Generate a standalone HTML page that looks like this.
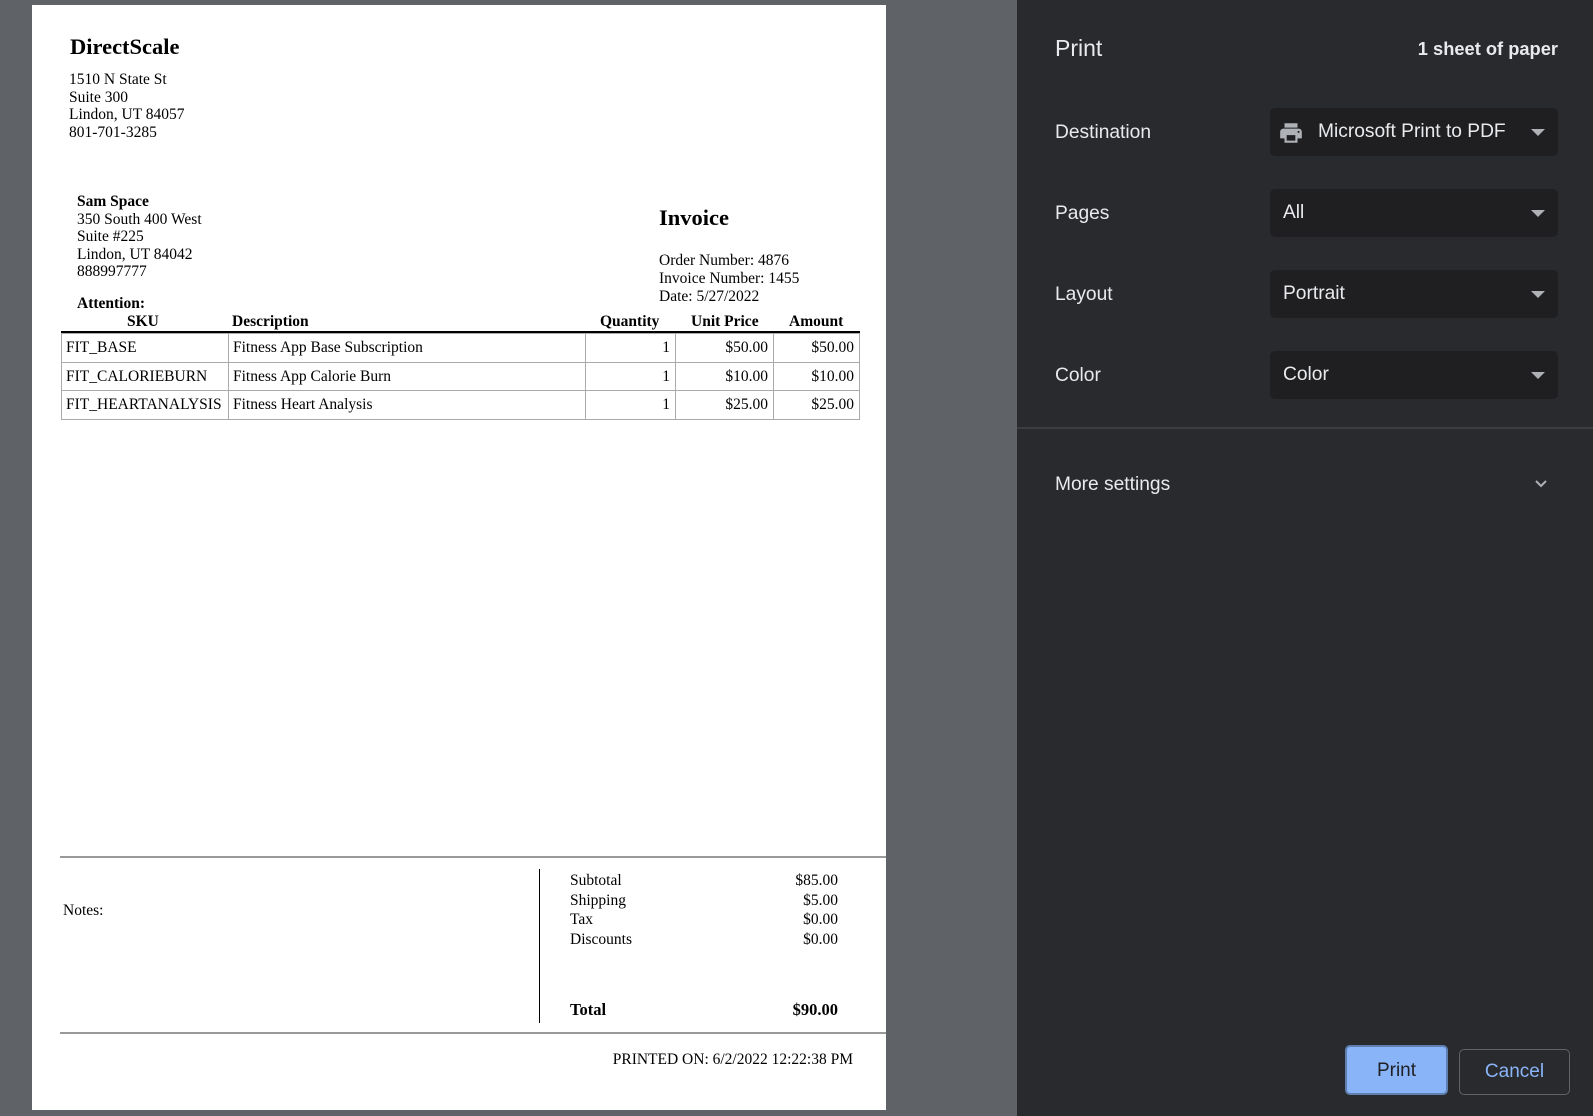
<!DOCTYPE html>
<html><head><meta charset="utf-8"><style>
*{margin:0;padding:0;box-sizing:border-box}
body{width:1593px;height:1116px;background:#5f6368;position:relative;overflow:hidden;font-family:"Liberation Serif",serif;color:#000}
.a{position:absolute;white-space:nowrap}
#page{position:absolute;left:32px;top:5px;width:854px;height:1105px;background:#fff}
.s{font-size:15.5px;line-height:17.5px}
.b{font-weight:bold}
.hl{position:absolute;background:#999;height:2px}
#panel{position:absolute;left:1017px;top:0;width:576px;height:1116px;background:#292a2d;font-family:"Liberation Sans",sans-serif;color:#e8eaed;font-weight:500}
.lab{position:absolute;left:38px;font-size:19.2px}
.sel{position:absolute;left:253px;width:288px;height:48px;background:#1f1f21;border-radius:5px;font-size:19.2px;padding-left:13px;line-height:48px}
.sel:after{content:"";position:absolute;right:13px;top:21px;border-left:7px solid transparent;border-right:7px solid transparent;border-top:7px solid #aeb1b6}
table{border-collapse:collapse}
</style></head><body>
<div id="page">
<div class="a b" style="left:38px;top:29px;font-size:22.5px">DirectScale</div>
<div class="a s" style="left:37px;top:66px">1510 N State St<br>Suite 300<br>Lindon, UT 84057<br>801-701-3285</div>
<div class="a s" style="left:45px;top:188px"><b>Sam Space</b><br>350 South 400 West<br>Suite #225<br>Lindon, UT 84042<br>888997777</div>
<div class="a s b" style="left:45px;top:290px">Attention:</div>
<div class="a b" style="left:627px;top:200px;font-size:22.5px">Invoice</div>
<div class="a s" style="left:627px;top:247px;line-height:18px">Order Number: 4876<br>Invoice Number: 1455<br>Date: 5/27/2022</div>
<div class="a s b" style="left:95px;top:308px">SKU</div>
<div class="a s b" style="left:200px;top:308px">Description</div>
<div class="a s b" style="left:568px;top:308px">Quantity</div>
<div class="a s b" style="left:659px;top:308px">Unit Price</div>
<div class="a s b" style="left:757px;top:308px">Amount</div>
<div class="a" style="left:29px;top:326px;width:799px;height:2px;background:#000"></div>
<table class="a s" style="left:29px;top:328px;width:799px">
<tr style="height:28.5px"><td style="width:167px;border:1px solid #aaa;padding-left:4px">FIT_BASE</td><td style="width:357px;border:1px solid #aaa;padding-left:4px">Fitness App Base Subscription</td><td style="width:90px;border:1px solid #aaa;text-align:right;padding-right:5px">1</td><td style="width:98px;border:1px solid #aaa;text-align:right;padding-right:5px">$50.00</td><td style="border:1px solid #aaa;text-align:right;padding-right:5px">$50.00</td></tr>
<tr style="height:28.5px"><td style="border:1px solid #aaa;padding-left:4px">FIT_CALORIEBURN</td><td style="border:1px solid #aaa;padding-left:4px">Fitness App Calorie Burn</td><td style="border:1px solid #aaa;text-align:right;padding-right:5px">1</td><td style="border:1px solid #aaa;text-align:right;padding-right:5px">$10.00</td><td style="border:1px solid #aaa;text-align:right;padding-right:5px">$10.00</td></tr>
<tr style="height:28.5px"><td style="border:1px solid #aaa;padding-left:4px">FIT_HEARTANALYSIS</td><td style="border:1px solid #aaa;padding-left:4px">Fitness Heart Analysis</td><td style="border:1px solid #aaa;text-align:right;padding-right:5px">1</td><td style="border:1px solid #aaa;text-align:right;padding-right:5px">$25.00</td><td style="border:1px solid #aaa;text-align:right;padding-right:5px">$25.00</td></tr>
</table>
<div class="hl" style="left:28px;top:851px;width:826px"></div>
<div class="a" style="left:507px;top:864px;width:1px;height:154px;background:#000"></div>
<div class="hl" style="left:28px;top:1027px;width:826px"></div>
<div class="a s" style="left:31px;top:897px">Notes:</div>
<div class="a s" style="left:538px;top:866px;line-height:19.5px">Subtotal<br>Shipping<br>Tax<br>Discounts</div>
<div class="a s" style="left:700px;top:866px;width:106px;text-align:right;line-height:19.5px">$85.00<br>$5.00<br>$0.00<br>$0.00</div>
<div class="a s b" style="left:538px;top:996px;font-size:16.5px">Total</div>
<div class="a s b" style="left:700px;top:996px;width:106px;text-align:right;font-size:16.5px">$90.00</div>
<div class="a s" style="left:500px;top:1046px;width:321px;text-align:right">PRINTED ON: 6/2/2022 12:22:38 PM</div>
</div>
<div id="panel">
<div class="a" style="left:38px;top:35px;font-size:23px">Print</div>
<div class="a" style="right:35px;top:38px;font-size:18.3px;font-weight:bold">1 sheet of paper</div>
<div class="lab" style="top:122px">Destination</div>
<div class="lab" style="top:203px">Pages</div>
<div class="lab" style="top:284px">Layout</div>
<div class="lab" style="top:365px">Color</div>
<div class="sel" style="top:108px;padding-left:48px">
<svg style="position:absolute;left:8px;top:12px" width="26" height="26" viewBox="0 0 24 24"><path fill="#aeb1b6" d="M19 8H5c-1.66 0-3 1.340-3 3v6h4v4h12v-4h4v-6c0-1.66-1.34-3-3-3zm-3 11H8v-5h8v5zm3-7c-.55 0-1-.45-1-1s.45-1 1-1 1 .45 1 1-.45 1-1 1zm-1-9H6v4h12V3z"/></svg>Microsoft Print to PDF</div>
<div class="sel" style="top:189px">All</div>
<div class="sel" style="top:270px">Portrait</div>
<div class="sel" style="top:351px">Color</div>
<div class="a" style="left:0;top:427px;width:576px;height:2px;background:#3c3d40"></div>
<div class="lab" style="top:474px">More settings</div>
<svg class="a" style="left:516px;top:476px" width="16" height="16" viewBox="0 0 16 16"><path d="M3 5l5 5 5-5" stroke="#aeb1b6" stroke-width="2" fill="none"/></svg>
<div class="a" style="left:328px;top:1045px;width:103px;height:50px;background:#8ab4f8;border:2px solid #5f7fb0;border-radius:5px;color:#202124;font-size:19px;text-align:center;line-height:48px">Print</div>
<div class="a" style="left:442px;top:1049px;width:111px;height:46px;border:1px solid #5f6368;border-radius:5px;color:#8ab4f8;font-size:19px;text-align:center;line-height:44px">Cancel</div>
</div>
</body></html>
